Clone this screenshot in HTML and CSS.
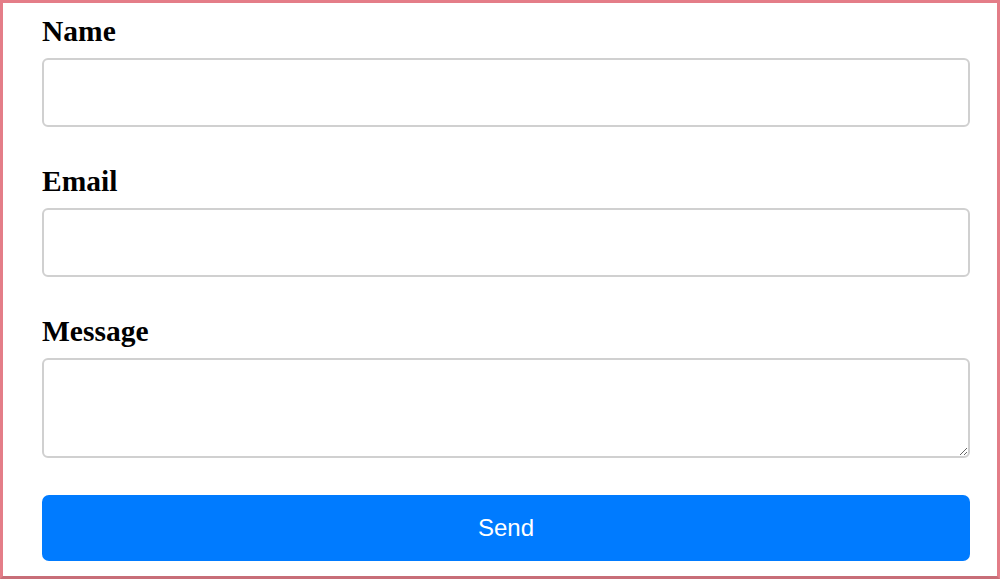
FILE: index.html
```html
<!DOCTYPE html>
<html lang="en">
<head>
    <meta charset="UTF-8">
    <meta name="viewport" content="width=device-width, initial-scale=1.0">
    <title>Contact</title>
    <link rel="stylesheet" href="styles.css">
</head>
<body>
    <div class="frame">
        <form class="contact-form">
            <label for="name">Name</label>
            <input type="text" id="name" name="name">

            <label for="email">Email</label>
            <input type="email" id="email" name="email">

            <label for="message">Message</label>
            <textarea id="message" name="message"></textarea>

            <button type="submit">Send</button>
        </form>
    </div>
</body>
</html>
```

FILE: styles.css
```css
html, body {
    margin: 0;
    padding: 0;
    height: 100%;
    background-color: #fff;
}

.frame {
    box-sizing: border-box;
    height: 579px;
    border: 3px solid #e47d88;
    border-bottom-color: #c86e78;
    padding: 12px 27px 0 39px;
}

.contact-form {
    display: flex;
    flex-direction: column;
}

label {
    display: block;
    font-family: "Liberation Serif", serif;
    font-weight: bold;
    font-size: 29.5px;
    line-height: 33px;
    color: #000;
    margin-bottom: 10px;
}

input,
textarea {
    box-sizing: border-box;
    width: 100%;
    border: 2px solid #d0d0d0;
    border-radius: 6px;
    font-size: 16px;
    padding: 10px;
    margin: 0 0 38px 0;
    background: #fff;
}

input {
    height: 69px;
}

textarea {
    height: 100px;
    resize: vertical;
    margin-bottom: 37px;
}

button {
    height: 66px;
    width: 100%;
    border: none;
    border-radius: 7px;
    background-color: #007bff;
    color: #fff;
    font-family: "Liberation Sans", Arial, sans-serif;
    font-size: 24px;
    cursor: pointer;
}
```
